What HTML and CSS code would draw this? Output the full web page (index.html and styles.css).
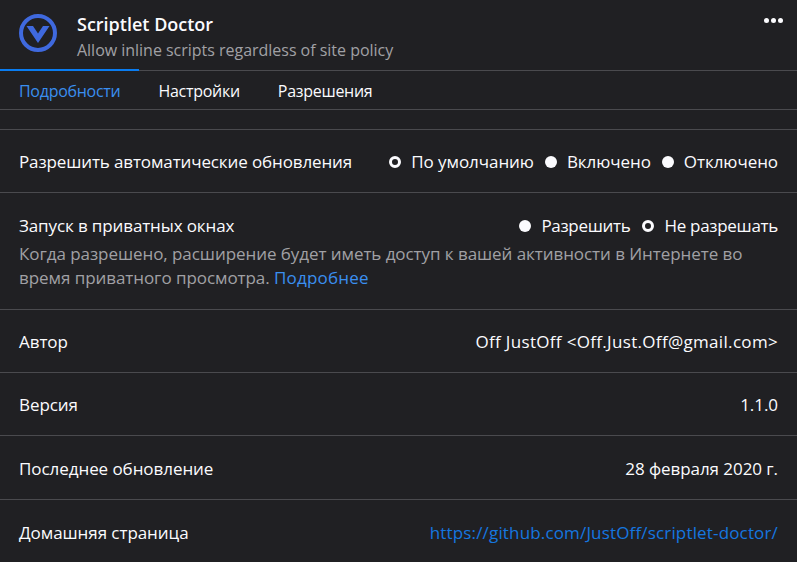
FILE: index.html
```html
<!DOCTYPE html>
<html lang="ru">
<head>
<meta charset="utf-8">
<title>Scriptlet Doctor</title>
<link rel="stylesheet" href="styles.css">
</head>
<body>
<header class="head">
  <svg class="logo" width="38" height="38" viewBox="0 0 38 38" aria-hidden="true">
    <circle cx="19" cy="19" r="17" fill="none" stroke="#3f69de" stroke-width="4"/>
    <path d="M7.500 12H14L19 19.500L24 12H30.500L19 29Z" fill="#3f69de"/>
  </svg>
  <div class="meta">
    <div class="name">Scriptlet Doctor</div>
    <div class="desc">Allow inline scripts regardless of site policy</div>
  </div>
  <div class="more"><i></i><i></i><i></i></div>
</header>
<nav class="tabs">
  <a class="tab active">Подробности</a>
  <a class="tab">Настройки</a>
  <a class="tab">Разрешения</a>
</nav>
<div class="spacer"></div>
<section class="row">
  <span class="tight">Разрешить автоматические обновления</span>
  <div class="radios">
    <label class="radio"><i class="dot on"></i>По умолчанию</label>
    <label class="radio"><i class="dot"></i>Включено</label>
    <label class="radio"><i class="dot"></i>Отключено</label>
  </div>
</section>
<section class="row private">
  <div class="line">
    <span class="tight">Запуск в приватных окнах</span>
    <div class="radios narrow">
      <label class="radio"><i class="dot"></i>Разрешить</label>
      <label class="radio"><i class="dot on"></i>Не разрешать</label>
    </div>
  </div>
  <p class="note">Когда разрешено, расширение будет иметь доступ к вашей активности в Интернете во время приватного просмотра. <a class="link">Подробнее</a></p>
</section>
<section class="row"><span>Автор</span><span class="latin">Off JustOff &lt;Off.Just.Off@gmail.com&gt;</span></section>
<section class="row"><span>Версия</span><span>1.1.0</span></section>
<section class="row tall"><span>Последнее обновление</span><span>28 февраля 2020 г.</span></section>
<section class="row tall"><span>Домашняя страница</span><a class="url">https://github.com/JustOff/scriptlet-doctor/</a></section>
</body>
</html>
```
FILE: styles.css
```css
html, body { margin: 0; height: 100%; overflow: hidden; }
body {
  background: #202023;
  color: #fbfbfe;
  font: 17px/22px "Open Sans", "Noto Sans", sans-serif;
  letter-spacing: -0.06px;
}
.head {
  height: 70px;
  box-sizing: border-box;
  display: flex;
  align-items: flex-start;
  padding: 14px 14px 0 19px;
}
.logo { flex: none; margin-right: 20px; }
.meta { flex: 1; margin-top: -1px; }
.name { font-weight: 600; font-size: 18px; line-height: 22px; letter-spacing: 0; }
.desc { color: #a0a0a5; font-size: 16px; line-height: 24px; margin-top: 3px; letter-spacing: -0.02px; }
.more { display: flex; gap: 2px; margin-top: 4px; }
.more i { width: 5px; height: 5px; border-radius: 50%; background: #fbfbfe; }
.tabs {
  height: 38px;
  display: flex;
  border-top: 1px solid #4a4a4e;
  border-bottom: 1px solid #4a4a4e;
  font-size: 16px;
  letter-spacing: -0.28px;
}
.tab { padding: 1px 19px 0; line-height: 38px; }
.tab.active { color: #3a8ff0; box-shadow: 0 -2px 0 #0a7cf0; }
.spacer { height: 19px; }
.row {
  min-height: 60px;
  padding: 2px 19px 0;
  border-top: 1px solid #4a4a4e;
  display: flex;
  justify-content: space-between;
  align-items: center;
}
.tall { min-height: 61px; }
.tight { letter-spacing: -0.12px; }
.latin { letter-spacing: 0.32px; }
.radios { display: flex; gap: 11px; }
.radios.narrow { letter-spacing: -0.3px; gap: 12px; }
.radio { display: flex; align-items: center; }
.dot { width: 12px; height: 12px; margin-right: 10px; border-radius: 50%; background: #fbfbfe; box-sizing: border-box; }
.dot.on { background: transparent; border: 3px solid #fbfbfe; }
.private { display: block; min-height: 0; padding-top: 22px; padding-bottom: 19px; }
.line { display: flex; justify-content: space-between; align-items: center; }
.note { margin: 5px 0 0; color: #a0a0a5; line-height: 24px; }
.link { color: #3a8ff0; letter-spacing: 0.2px; }
.url { color: #1577e0; letter-spacing: 0.16px; }
```
